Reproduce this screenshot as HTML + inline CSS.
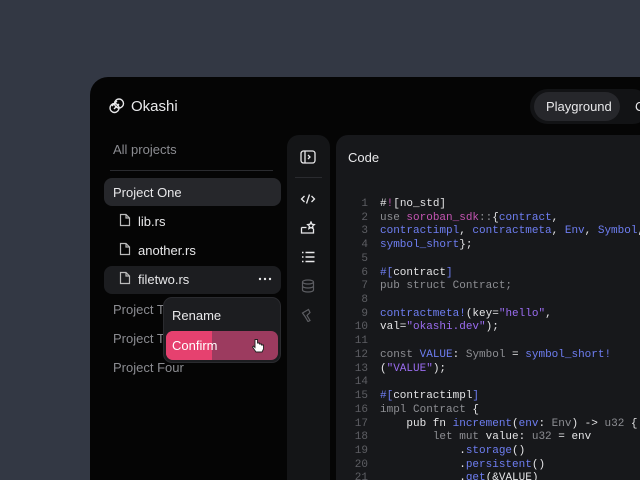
<!DOCTYPE html>
<html><head><meta charset="utf-8"><style>
*{margin:0;padding:0;box-sizing:border-box}
html,body{width:640px;height:480px;overflow:hidden}
body{background:#333844;font-family:"Liberation Sans",sans-serif;position:relative}
.panel{position:absolute;left:90px;top:77px;width:600px;height:403px;background:#050505;border-radius:18px 18px 0 0}
.abs{position:absolute}
.t{color:#e8e8ea;font-size:13px}
.g{color:#8b8c91;font-size:13px}
.row{position:absolute;left:104px;width:177px;height:28px;border-radius:8px}
.code{position:absolute;left:336px;top:135px;width:320px;height:345px;background:#17181b;border-radius:12px 12px 0 0}
pre{position:absolute;left:346px;top:198px;font-family:"Liberation Mono",monospace;font-size:11px;line-height:13.72px;color:#e4e4e6}
.n{color:#5d5e63;display:inline-block;width:22px;text-align:right;margin-right:12px}
.k{color:#8d8e93}.p{color:#c455b2}.b{color:#6e7ef2}.s{color:#9a6cf0}
svg{position:absolute}
</style></head><body>
<div class="panel"></div>
<svg style="left:108px;top:97px" width="18" height="18" viewBox="0 0 18 18" fill="none" stroke="#e8e8ea" stroke-width="1.4"><circle cx="11" cy="6.5" r="4.5"/><circle cx="6.5" cy="11" r="4.5"/><path d="M4 9l5-5M6 12l5-5"/></svg>
<div class="abs t" style="left:131px;top:98px;font-size:15px">Okashi</div>
<div class="abs" style="left:530px;top:89px;width:120px;height:35px;background:#121315;border-radius:18px"></div>
<div class="abs" style="left:534px;top:92px;width:86px;height:29px;background:#26272b;border-radius:15px"></div>
<div class="abs t" style="left:546px;top:99px">Playground</div>
<div class="abs t" style="left:635px;top:99px">C</div>
<div class="abs g" style="left:113px;top:142px">All projects</div>
<div class="abs" style="left:110px;top:170px;width:163px;height:1px;background:#2a2b2f"></div>
<div class="row" style="top:178px;background:#26272b"></div>
<div class="abs t" style="left:113px;top:185px">Project One</div>
<svg style="left:119px;top:213px" width="12" height="14" viewBox="0 0 12 14" fill="none" stroke="#bbb" stroke-width="1.2"><path d="M1.5 1.5h5.5l3.5 3.5v7.5h-9z M7 1.5v3.5h3.5"/></svg>
<div class="abs t" style="left:138px;top:214px">lib.rs</div>
<svg style="left:119px;top:242px" width="12" height="14" viewBox="0 0 12 14" fill="none" stroke="#bbb" stroke-width="1.2"><path d="M1.5 1.5h5.5l3.5 3.5v7.5h-9z M7 1.5v3.5h3.5"/></svg>
<div class="abs t" style="left:138px;top:243px">another.rs</div>
<div class="row" style="top:266px;background:#1c1d20"></div>
<svg style="left:119px;top:271px" width="12" height="14" viewBox="0 0 12 14" fill="none" stroke="#bbb" stroke-width="1.2"><path d="M1.5 1.5h5.5l3.5 3.5v7.5h-9z M7 1.5v3.5h3.5"/></svg>
<div class="abs t" style="left:138px;top:272px">filetwo.rs</div>
<svg style="left:258px;top:277px" width="14" height="4" viewBox="0 0 14 4" fill="#e8e8ea"><circle cx="2" cy="2" r="1.2"/><circle cx="7" cy="2" r="1.2"/><circle cx="12" cy="2" r="1.2"/></svg>
<div class="abs g" style="left:113px;top:302px">Project Two</div>
<div class="abs g" style="left:113px;top:331px">Project Three</div>
<div class="abs g" style="left:113px;top:360px">Project Four</div>
<div class="abs" style="left:163px;top:297px;width:118px;height:66px;background:#1c1d20;border-radius:9px;border:1px solid #2a2b2f"></div>
<div class="abs t" style="left:172px;top:308px">Rename</div>
<div class="abs" style="left:166px;top:331px;width:112px;height:29px;background:#9c3b5f;border-radius:7px;overflow:hidden"><div style="width:46px;height:29px;background:#e6416f"></div></div>
<div class="abs" style="left:172px;top:338px;color:#fff;font-size:13px">Confirm</div>
<svg style="left:251px;top:338px" width="14" height="16" viewBox="0 0 14 16"><path d="M4 1.5v8l-1.5-1.5-1 1 3.5 5h6l1.5-3v-4h-2v-1h-2v-1h-2v-3.5z" fill="#fff" stroke="#222" stroke-width="0.9"/></svg>
<div class="abs" style="left:287px;top:135px;width:43px;height:345px;background:#141517;border-radius:12px 12px 0 0"></div>
<div class="abs" style="left:295px;top:177px;width:27px;height:1px;background:#2a2b2f"></div>
<svg style="left:300px;top:150px" width="16" height="14" viewBox="0 0 16 14" fill="none" stroke="#e8e8ea" stroke-width="1.3"><rect x="1" y="1" width="14" height="12" rx="2.5"/><path d="M5 1v12M8 5l2 2-2 2"/></svg>
<svg style="left:300px;top:193px" width="16" height="12" viewBox="0 0 16 12" fill="none" stroke="#e8e8ea" stroke-width="1.3"><path d="M4.5 3l-3 3 3 3M11.5 3l3 3-3 3M9.5 1.5l-3 9"/></svg>
<svg style="left:300px;top:221px" width="16" height="14" viewBox="0 0 16 14" fill="none" stroke="#e8e8ea" stroke-width="1.3"><path d="M1.5 6.5h5M1.5 6.5v5.5h12v-4M11 1l1 2.3 2.3.3-1.7 1.6.5 2.4-2.1-1.2-2.1 1.2.5-2.4-1.7-1.6 2.3-.3z"/></svg>
<svg style="left:301px;top:251px" width="14" height="12" viewBox="0 0 14 12" fill="none" stroke="#e8e8ea" stroke-width="1.4"><path d="M1 1.5h1.5M1 6h1.5M1 10.5h1.5M4.5 1.5h9M4.5 6h9M4.5 10.5h9"/></svg>
<svg style="left:301px;top:279px" width="14" height="14" viewBox="0 0 14 14" fill="none" stroke="#5c5d62" stroke-width="1.2"><ellipse cx="7" cy="3" rx="5.5" ry="2"/><path d="M1.5 3v8c0 1.1 2.5 2 5.5 2s5.5-.9 5.5-2V3M1.5 7c0 1.1 2.5 2 5.5 2s5.5-.9 5.5-2"/></svg>
<svg style="left:301px;top:308px" width="14" height="14" viewBox="0 0 14 14" fill="none" stroke="#5c5d62" stroke-width="1.2"><path d="M1.5 5l6-3.5 1.5 3-3 3 3 5-2 1-3-5z"/></svg>
<div class="code"></div>
<div class="abs t" style="left:348px;top:150px">Code</div>
<pre><span class="n">1</span>#<span class="p">!</span>[no_std]
<span class="n">2</span><span class="k">use</span> <span class="p">soroban_sdk</span><span class="k">::</span>{<span class="b">contract</span>,
<span class="n">3</span><span class="b">contractimpl</span>, <span class="b">contractmeta</span>, <span class="b">Env</span>, <span class="b">Symbol</span>,
<span class="n">4</span><span class="b">symbol_short</span>};
<span class="n">5</span>
<span class="n">6</span><span class="b">#[</span>contract<span class="b">]</span>
<span class="n">7</span><span class="k">pub struct Contract;</span>
<span class="n">8</span>
<span class="n">9</span><span class="b">contractmeta!</span>(key=<span class="s">"hello"</span>,
<span class="n">10</span>val=<span class="s">"okashi.dev"</span>);
<span class="n">11</span>
<span class="n">12</span><span class="k">const</span> <span class="b">VALUE</span>: <span class="k">Symbol</span> = <span class="b">symbol_short!</span>
<span class="n">13</span>(<span class="s">"VALUE"</span>);
<span class="n">14</span>
<span class="n">15</span><span class="b">#[</span>contractimpl<span class="b">]</span>
<span class="n">16</span><span class="k">impl Contract</span> {
<span class="n">17</span>    pub fn <span class="b">increment</span>(<span class="b">env</span>: <span class="k">Env</span>) -> <span class="k">u32</span> {
<span class="n">18</span>        <span class="k">let mut</span> value: <span class="k">u32</span> = env
<span class="n">19</span>            .<span class="b">storage</span>()
<span class="n">20</span>            .<span class="b">persistent</span>()
<span class="n">21</span>            .<span class="b">get</span>(&amp;VALUE)</pre>
</body></html>
